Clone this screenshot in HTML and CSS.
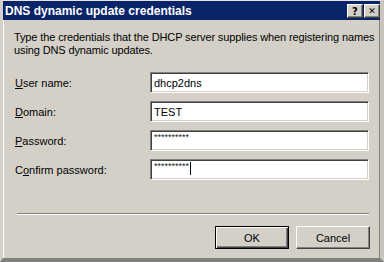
FILE: index.html
```html
<!DOCTYPE html>
<html lang="en">
<head>
  <meta charset="UTF-8">
  <title>DNS dynamic update credentials</title>
  <link rel="stylesheet" href="styles.css">
</head>
<body>
  <div class="window">
    <div class="title-bar">
      <span class="title-text">DNS dynamic update credentials</span>
      <div class="title-buttons">
        <button class="title-btn">?</button>
        <button class="title-btn close">&#x2715;</button>
      </div>
    </div>

    <div class="dialog-body">
      <p class="intro">Type the credentials that the DHCP server supplies when registering names<br>using DNS dynamic updates.</p>

      <div class="form-grid">
        <label class="field-label"><u>U</u>ser name:</label>
        <div class="field">dhcp2dns</div>

        <label class="field-label"><u>D</u>omain:</label>
        <div class="field">TEST</div>

        <label class="field-label"><u>P</u>assword:</label>
        <div class="field secret">**********</div>

        <label class="field-label">C<u>o</u>nfirm password:</label>
        <div class="field secret">**********<span class="caret"></span></div>
      </div>

      <div class="separator"></div>

      <div class="button-row">
        <button class="push-btn default">OK</button>
        <button class="push-btn">Cancel</button>
      </div>
    </div>
  </div>
</body>
</html>
```

FILE: styles.css
```css
body {
  margin: 0;
  padding: 0;
  background: #d4d0c8;
  font-family: 'Liberation Sans', Arial, sans-serif;
  font-size: 11px;
  color: #000;
  overflow: hidden;
}

.window {
  box-sizing: border-box;
  width: 384px;
  height: 262px;
  background: #d4d0c8;
  border-top: 1px solid #e4e2dc;
  border-left: 3px solid #d4d0c8;
  border-right: 4px solid #c8c5bf;
  border-bottom: 4px solid #808080;
  box-shadow: inset -1px 0 #808080, inset 1px 0 #ffffff;
}

/* title bar */
.title-bar {
  height: 19px;
  background: #0a246a;
  display: flex;
  align-items: center;
  justify-content: space-between;
  padding-left: 2px;
}

.title-text {
  color: #fff;
  font-weight: bold;
  font-size: 12px;
}

.title-buttons {
  display: flex;
  gap: 1px;
  margin-top: 1px;
}

.title-btn {
  box-sizing: border-box;
  width: 16px;
  height: 14px;
  padding: 0;
  background: #d4d0c8;
  border: 1px solid;
  border-color: #ffffff #404040 #404040 #ffffff;
  box-shadow: inset -1px -1px #808080;
  font-family: 'DejaVu Sans', sans-serif;
  font-weight: bold;
  font-size: 10px;
  line-height: 11px;
  color: #000;
}

.title-btn.close {
  font-size: 9px;
}

/* body */
.dialog-body {
  padding: 11px 10px 0 11px;
}

.intro {
  margin: 0;
  line-height: 13px;
  white-space: nowrap;
  letter-spacing: -0.12px;
}

.form-grid {
  display: grid;
  grid-template-columns: 136px 219px;
  grid-auto-rows: 21px;
  row-gap: 8px;
  align-items: center;
  margin-top: 15px;
}

.field-label {
  padding-left: 1px;
}

.field {
  box-sizing: border-box;
  height: 21px;
  background: #fff;
  border: 1px solid;
  border-color: #808080 #ffffff #ffffff #808080;
  box-shadow: inset 1px 1px #404040, inset -1px -1px #d4d0c8;
  padding: 3px 0 0 3px;
  font-size: 11px;
  line-height: 14px;
  white-space: nowrap;
}

.field.secret {
  font-size: 9px;
  line-height: 9px;
  padding-top: 2px;
  color: #222;
}

.caret {
  display: inline-block;
  width: 1px;
  height: 13px;
  background: #000;
  vertical-align: top;
  margin-left: 1px;
}

.separator {
  margin: 33px 0 0 3px;
  width: 352px;
  height: 1px;
  background: #808080;
  border-bottom: 1px solid #ffffff;
}

.button-row {
  display: flex;
  justify-content: flex-end;
  gap: 7px;
  margin-top: 11px;
  width: 356px;
}

.push-btn {
  box-sizing: border-box;
  width: 74px;
  height: 23px;
  padding: 0;
  background: #d4d0c8;
  border: 1px solid;
  border-color: #ffffff #404040 #404040 #ffffff;
  box-shadow: inset -1px -1px #808080;
  font-family: 'Liberation Sans', Arial, sans-serif;
  font-size: 11px;
  color: #000;
}

.push-btn.default {
  border: 1px solid #000;
  box-shadow: inset 1px 1px #ffffff, inset -1px -1px #404040, inset -2px -2px #808080;
}
```
